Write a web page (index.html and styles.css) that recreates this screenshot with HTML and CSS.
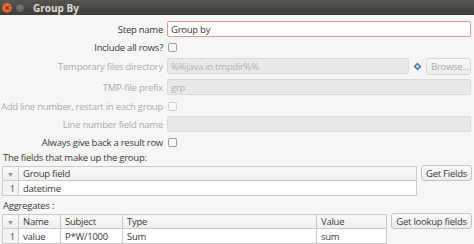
FILE: index.html
```html
<!DOCTYPE html>
<html>
<head>
    <title>Group By</title>
    <link rel="stylesheet" href="styles.css">
</head>
<body>
    <div class="titlebar">
        <span class="win-btn close">&#215;</span>
        <span class="win-btn minimize"></span>
        <span class="title">Group By</span>
    </div>

    <div class="dialog">
        <div class="row r1">
            <label class="label">Step name</label>
            <input type="text" class="field focused" value="Group by">
        </div>
        <div class="row r2">
            <label class="label">Include all rows?</label>
            <span class="check"></span>
        </div>
        <div class="row r3">
            <label class="label disabled">Temporary files directory</label>
            <input type="text" class="field" value="%%java.io.tmpdir%%" disabled>
            <svg class="var-icon" width="9" height="9" viewBox="0 0 9 9">
                <path d="M4.5 0.5 L8.5 4.5 L4.5 8.5 L0.5 4.5 Z" fill="#4a7fb5"/>
                <circle cx="4.5" cy="4.5" r="1.4" fill="#cfe0f0"/>
            </svg>
            <button class="btn browse" disabled>Browse...</button>
        </div>
        <div class="row r4">
            <label class="label disabled">TMP-file prefix</label>
            <input type="text" class="field" value="grp" disabled>
        </div>
        <div class="row r5">
            <label class="label disabled">Add line number, restart in each group</label>
            <span class="check disabled"></span>
        </div>
        <div class="row r6">
            <label class="label disabled">Line number field name</label>
            <input type="text" class="field" value="" disabled>
        </div>
        <div class="row r7">
            <label class="label">Always give back a result row</label>
            <span class="check"></span>
        </div>

        <div class="caption c1">The fields that make up the group:</div>
        <div class="grid-row">
            <table class="grid group-grid">
                <tr>
                    <th class="num">&#9662;</th>
                    <th>Group field</th>
                </tr>
                <tr>
                    <td class="num">1</td>
                    <td>datetime</td>
                </tr>
            </table>
            <button class="btn side">Get Fields</button>
        </div>

        <div class="caption c2">Aggregates :</div>
        <div class="grid-row">
            <table class="grid agg-grid">
                <tr>
                    <th class="num">&#9662;</th>
                    <th class="col-name">Name</th>
                    <th class="col-subject">Subject</th>
                    <th class="col-type">Type</th>
                    <th>Value</th>
                </tr>
                <tr>
                    <td class="num">1</td>
                    <td>value</td>
                    <td>P*W/1000</td>
                    <td>Sum</td>
                    <td>sum</td>
                </tr>
            </table>
            <button class="btn side">Get lookup fields</button>
        </div>
    </div>
</body>
</html>
```

FILE: styles.css
```css
body {
    margin: 0;
    width: 474px;
    height: 244px;
    overflow: hidden;
    background-color: #f6f6f5;
    font-family: "Open Sans", "DejaVu Sans", sans-serif;
    font-size: 9.5px;
    letter-spacing: -0.25px;
    color: #3a3a3a;
}

.titlebar {
    height: 15px;
    display: flex;
    align-items: center;
    background: linear-gradient(#58554f, #3d3c38);
    color: #dfdbd2;
    letter-spacing: 0;
}

.win-btn {
    width: 10px;
    height: 10px;
    border-radius: 50%;
    box-sizing: border-box;
}

.close {
    margin-left: 2px;
    background: radial-gradient(circle at 50% 40%, #f4794a, #d8491c);
    color: #4a2a1c;
    font-size: 9px;
    line-height: 10px;
    text-align: center;
    font-weight: bold;
}

.minimize {
    margin-left: 3px;
    background: radial-gradient(circle at 50% 40%, #7d7a74, #5b5953);
    border: 1px solid #46443f;
}

.title {
    margin-left: 8px;
    font-weight: bold;
    font-size: 10px;
}

.dialog {
    padding-top: 5px;
}

.row {
    display: flex;
    align-items: center;
    padding-right: 3px;
}

.r1 { height: 18px; }
.r2 { height: 18px; }
.r3 { height: 20px; }
.r4 { height: 22px; }
.r5 { height: 16px; }
.r6 { height: 20px; }
.r7 { height: 16px; }

.label {
    width: 163px;
    flex: none;
    text-align: right;
    white-space: nowrap;
    margin-right: 4px;
}

.label.disabled {
    color: #acacac;
}

.field {
    flex: 1;
    min-width: 0;
    height: 16px;
    box-sizing: border-box;
    margin: 0;
    padding: 0 3px;
    font-family: inherit;
    font-size: 9.5px;
    letter-spacing: -0.25px;
    color: #3a3a3a;
    background-color: #ffffff;
    border: 1px solid #cfcfcf;
    border-radius: 2px;
}

.field:disabled {
    background-color: #e9e9e8;
    color: #b0b0b0;
    border-color: #dadad9;
}

.field.focused {
    border-color: #e49b8b;
}

.check {
    width: 9px;
    height: 9px;
    margin-left: 1px;
    box-sizing: border-box;
    border: 1px solid #9c9c9c;
    border-radius: 2px;
    background-color: #fbfbfb;
}

.check.disabled {
    border-color: #d0d0d0;
}

.var-icon {
    margin: 0 4px;
}

.btn {
    font-family: inherit;
    font-size: 9.5px;
    letter-spacing: -0.25px;
    color: #3a3a3a;
    height: 16px;
    padding: 0 4px;
    margin: 0;
    box-sizing: border-box;
    border: 1px solid #c4c4c3;
    border-radius: 3px;
    background: linear-gradient(#fafafa, #ececeb);
}

.btn:disabled {
    color: #a8a8a8;
    border-color: #d6d6d5;
}

.browse {
    width: 45px;
    height: 17px;
}

.caption {
    height: 16px;
    line-height: 16px;
    padding-left: 3px;
}

.c2 {
    margin-top: 2px;
}

.grid-row {
    display: flex;
    align-items: flex-start;
    padding-left: 2px;
}

.grid {
    flex: none;
    border-collapse: collapse;
    background-color: #ffffff;
}

.grid th,
.grid td {
    border: 1px solid #cbcbcb;
    padding: 0 4px;
    text-align: left;
    font-weight: normal;
    white-space: nowrap;
}

.grid th {
    height: 13px;
    background: linear-gradient(#fbfbfb, #eeeeee);
}

.grid td {
    height: 14px;
}

.grid .num {
    width: 7px;
    padding: 0 3px 0 5px;
    text-align: right;
    background-color: #f4f4f4;
    color: #4a4a4a;
}

.grid th.num {
    text-align: center;
    padding: 0 3px;
    color: #8a8a8a;
    font-size: 8px;
}

.group-grid {
    width: 415px;
}

.agg-grid {
    width: 385px;
}

.col-name { width: 33px; }
.col-subject { width: 53px; }
.col-type { width: 185px; }

.side {
    margin-left: 4px;
    margin-top: -1px;
    flex: 1;
    margin-right: 2px;
    white-space: nowrap;
}
```
